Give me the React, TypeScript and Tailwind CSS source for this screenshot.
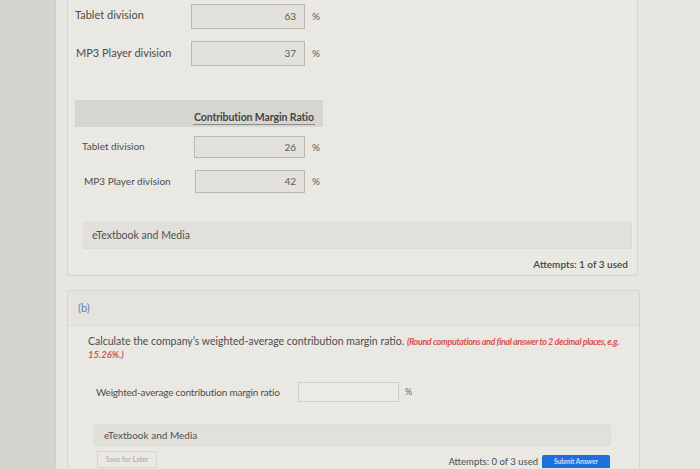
import React from 'react';

function ValueInput({ value, w, h }: { value: string; w: string; h: string }) {
  return (
    <div className={`flex items-center ${w} ${h}`}>
      <div className="flex h-full flex-1 items-center justify-end border border-[#b9b8b3] bg-[#e2e1dc] pr-[8px] text-[10px] text-[#5a5a5a]">
        {value}
      </div>
      <span className="ml-[7px] w-[12px] text-[10px] text-[#5a5a5a]">%</span>
    </div>
  );
}

export default function App() {
  return (
    <div className="flex h-[469px] w-[700px] overflow-hidden bg-[#e7e6e1] font-['Lato',sans-serif] text-[#4d4d4d]">
      <div className="w-[56px] shrink-0 border-r border-[#cfcec9] bg-[#d4d3ce]" />

      <div className="flex flex-1 flex-col pl-[11px]">
        {/* part (a) */}
        <div className="w-[571px] rounded-b-[3px] border-x border-b border-[#d6d5d0] bg-[#e9e8e3]">
          <div className="pl-[7px] pt-[4px]">
            <div className="flex items-start">
              <span className="w-[116px] pt-[3px] text-[11px]">Tablet division</span>
              <ValueInput value="63" w="w-[133px]" h="h-[25px]" />
            </div>
            <div className="mt-[12px] flex items-start">
              <span className="w-[116px] pl-[1px] pt-[4px] text-[11px]">MP3 Player division</span>
              <ValueInput value="37" w="w-[133px]" h="h-[25px]" />
            </div>

            <div className="mt-[34px] flex h-[27px] w-[248px] items-end bg-[#d6d5d0] pb-[2px]">
              <div className="ml-[118px] border-b border-[#8a8a8a] px-[1px] text-[10.5px] font-bold leading-[14px] tracking-[-0.1px] text-[#444]">
                Contribution Margin Ratio
              </div>
            </div>

            <div className="mt-[9px] flex items-start pl-[7px]">
              <span className="w-[112px] pt-[3px] text-[10px]">Tablet division</span>
              <ValueInput value="26" w="w-[130px]" h="h-[22px]" />
            </div>
            <div className="mt-[12px] flex items-start pl-[9px]">
              <span className="w-[111px] pt-[4px] text-[10px]">MP3 Player division</span>
              <ValueInput value="42" w="w-[129px]" h="h-[23px]" />
            </div>
          </div>

          <div className="ml-[15px] mt-[29px] flex h-[27px] w-[549px] items-center rounded-[2px] border border-[#dcdbd6] bg-[#e1e0db] pl-[8px] text-[10.5px] text-[#505050]">
            eTextbook and Media
          </div>
          <div className="flex justify-end pr-[9px] pt-[8px] pb-[3px] text-[10px] font-semibold text-[#454545]">
            Attempts: 1 of 3 used
          </div>
        </div>

        {/* part (b) */}
        <div className="mt-[14px] w-[573px] rounded-t-[3px] border-x border-t border-[#d6d5d0] bg-[#e9e8e3]">
          <div className="flex h-[35px] items-center border-b border-[#dad9d4] bg-[#e4e3de] pl-[10px] text-[11px] text-[#5f7fb4]">
            (b)
          </div>
          <div className="px-[20px] pt-[9px]">
            <p className="text-[10.5px] leading-[13px] text-[#4d4d4d]">
              <span className="whitespace-nowrap">
                Calculate the company’s weighted-average contribution margin ratio.{' '}
                <span className="text-[9px] font-bold italic tracking-[-0.4px] text-[#d9534f]">
                  (Round computations and final answer to 2 decimal places, e.g.
                </span>
              </span>
              <br />
              <span className="text-[9.5px] font-bold italic text-[#d9534f]">15.26%.)</span>
            </p>

            <div className="mt-[21px] flex items-center pl-[8px]">
              <span className="w-[202px] text-[10px] tracking-[-0.2px]">Weighted-average contribution margin ratio</span>
              <div className="flex h-[20px] items-center">
                <div className="h-full w-[101px] border border-[#cfcec9] bg-[#ecebe6]" />
                <span className="ml-[6px] text-[9px] text-[#666]">%</span>
              </div>
            </div>

            <div className="ml-[6px] mt-[22px] flex h-[22px] w-[517px] items-center rounded-[2px] border border-[#dcdbd6] bg-[#e1e0db] pl-[9px] text-[10px] text-[#505050]">
              eTextbook and Media
            </div>

            <div className="ml-[9px] mt-[5px] flex w-[513px] items-end justify-between">
              <div className="flex h-[17px] w-[60px] items-center justify-center border border-[#d6d5d0] text-[7px] text-[#a8a7a3]">
                Save for Later
              </div>
              <div className="flex items-end">
                <span className="text-[9.5px] leading-[12px] text-[#4d4d4d]">Attempts: 0 of 3 used</span>
                <div className="ml-[4px] flex h-[13px] w-[68px] items-start justify-center rounded-t-[2px] bg-[#1e6fd9] pt-[2px] text-[6.5px] font-bold leading-[9px] text-[#cfe0ff]">
                  Submit Answer
                </div>
              </div>
            </div>
          </div>
        </div>
      </div>
    </div>
  );
}
